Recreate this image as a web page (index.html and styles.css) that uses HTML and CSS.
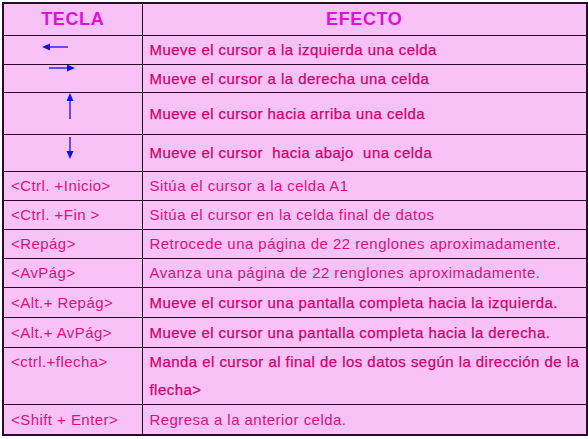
FILE: index.html
```html
<!DOCTYPE html>
<html lang="es">
<head>
<meta charset="utf-8">
<link rel="stylesheet" href="styles.css">
</head>
<body>
<table class="keys">
  <colgroup><col class="c1"><col class="c2"></colgroup>
  <tr class="r-head">
    <th>TECLA</th>
    <th>EFECTO</th>
  </tr>
  <tr class="r-a">
    <td class="arrow-cell"><svg class="ar ar-left" width="26" height="8" viewBox="0 0 26 8"><line x1="6" y1="4" x2="26" y2="4" stroke="#1010e8" stroke-width="1.3"/><polygon points="0,4 8,0.5 8,7.5" fill="#1010e8"/></svg></td>
    <td class="m">Mueve el cursor a la izquierda una celda</td>
  </tr>
  <tr class="r-b">
    <td class="arrow-cell"><svg class="ar ar-right" width="26" height="8" viewBox="0 0 26 8"><line x1="0" y1="4" x2="20" y2="4" stroke="#1010e8" stroke-width="1.3"/><polygon points="26,4 18,0.5 18,7.5" fill="#1010e8"/></svg></td>
    <td class="m">Mueve el cursor a la derecha una celda</td>
  </tr>
  <tr class="r-up">
    <td class="arrow-cell"><svg class="ar ar-up" width="8" height="26" viewBox="0 0 8 26"><line x1="4" y1="6" x2="4" y2="26" stroke="#1010e8" stroke-width="1.3"/><polygon points="4,0 0.5,8 7.5,8" fill="#1010e8"/></svg></td>
    <td class="m">Mueve el cursor hacia arriba una celda</td>
  </tr>
  <tr class="r-down">
    <td class="arrow-cell"><svg class="ar ar-down" width="8" height="22" viewBox="0 0 8 22"><line x1="4" y1="0" x2="4" y2="16" stroke="#1010e8" stroke-width="1.3"/><polygon points="4,22 0.5,14 7.5,14" fill="#1010e8"/></svg></td>
    <td class="m">Mueve el cursor&nbsp; hacia abajo&nbsp; una celda</td>
  </tr>
  <tr class="r-n"><td>&lt;Ctrl. +Inicio&gt;</td><td>Sitúa el cursor a la celda A1</td></tr>
  <tr class="r-n"><td>&lt;Ctrl. +Fin &gt;</td><td>Sitúa el cursor en la celda final de datos</td></tr>
  <tr class="r-n"><td>&lt;Repág&gt;</td><td>Retrocede una página de 22 renglones aproximadamente.</td></tr>
  <tr class="r-n"><td>&lt;AvPág&gt;</td><td>Avanza una página de 22 renglones aproximadamente.</td></tr>
  <tr class="r-n2"><td>&lt;Alt.+ Repág&gt;</td><td class="m">Mueve el cursor una pantalla completa hacia la izquierda.</td></tr>
  <tr class="r-n2"><td>&lt;Alt.+ AvPág&gt;</td><td class="m">Mueve el cursor una pantalla completa hacia la derecha.</td></tr>
  <tr class="r-two"><td>&lt;ctrl.+flecha&gt;</td><td class="m">Manda el cursor al final de los datos según la dirección de la flecha&gt;</td></tr>
  <tr class="r-last"><td>&lt;Shift + Enter&gt;</td><td>Regresa a la anterior celda.</td></tr>
</table>
</body>
</html>
```
FILE: styles.css
```css
html, body {
  margin: 0;
  padding: 0;
  background: #ffffff;
}
body {
  padding: 2px 0 0 2px;
}
.keys {
  border-collapse: collapse;
  width: 584px;
  background: #f9c2f6;
  border: 2px solid #2a0a2a;
  font-family: "Liberation Sans", Arial, sans-serif;
  font-size: 15px;
  letter-spacing: 0.45px;
  color: #d8117e;
  table-layout: fixed;
}
.c1 { width: 139px; }
.c2 { width: 445px; }
.keys th, .keys td {
  border: 1px solid #2a0a2a;
  padding: 0 0 0 7px;
  text-align: left;
  vertical-align: middle;
  line-height: 17px;
  font-weight: normal;
}
.keys th {
  text-align: center;
  font-size: 18px;
  font-weight: bold;
  letter-spacing: 0.6px;
  color: #e010d8;
  padding: 0;
  vertical-align: top;
  padding-top: 7px;
}
.keys td.m {
  color: #d0006c;
  -webkit-text-stroke: 0.25px #d0006c;
}
.r-head { height: 32px; }
.r-a { height: 29px; }
.r-b { height: 28px; }
.r-up { height: 42px; }
.r-down { height: 37px; }
.r-n { height: 29px; }
.r-n2 { height: 30px; }
.r-two { height: 57px; }
.r-two td { line-height: 28px; vertical-align: top; }
.r-last { height: 31px; }
.ar { display: block; }
.ar-left { margin-left: 31px; margin-top: -6px; }
.ar-right { margin-left: 38px; margin-top: -14px; }
.ar-up { margin-left: 55px; margin-top: -14px; }
.ar-down { margin-left: 55px; margin-top: -10px; }
```
